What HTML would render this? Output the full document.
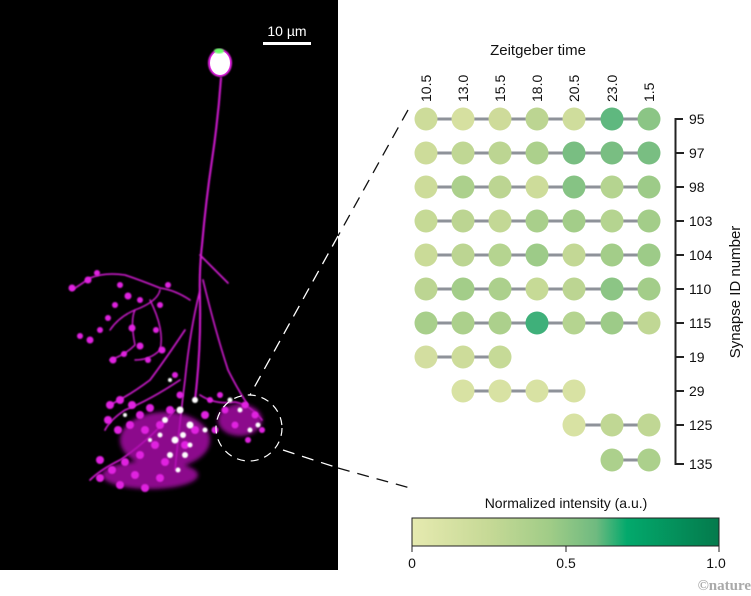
<!DOCTYPE html>
<html><head><meta charset="utf-8"><style>
html,body{margin:0;padding:0;background:#fff;width:751px;height:596px;overflow:hidden}
svg{display:block}
text{font-family:"Liberation Sans",Arial,sans-serif;fill:#111}
</style></head><body>
<svg width="751" height="596" viewBox="0 0 751 596" xmlns="http://www.w3.org/2000/svg">
<defs>
<linearGradient id="cb" x1="0" x2="1" y1="0" y2="0">
<stop offset="0" stop-color="#e6eab0"/>
<stop offset="0.25" stop-color="#c6d996"/>
<stop offset="0.45" stop-color="#a0cc87"/>
<stop offset="0.6" stop-color="#6fba80"/>
<stop offset="0.7" stop-color="#03a96c"/>
<stop offset="1" stop-color="#047a4c"/>
</linearGradient>
<filter id="gl"><feGaussianBlur stdDeviation="0.7"/></filter>
<filter id="gl2"><feGaussianBlur stdDeviation="2"/></filter>
</defs>
<rect x="0" y="0" width="338" height="570" fill="#000"/>
<rect x="263" y="42" width="48" height="3" fill="#fff"/>
<text x="287" y="36" font-size="14" text-anchor="middle" style="fill:#fff">10 µm</text>
<!-- neuron -->
<g filter="url(#gl)" fill="none" stroke="#d81ed8" stroke-linecap="round" stroke-linejoin="round">
<path d="M221 78 Q218 120 212 160 Q206 200 202 245 Q199 270 200 300 Q201 350 195 400" stroke-width="2"/>
<path d="M200 255 Q215 270 228 283" stroke-width="1.6"/>
<path d="M203 280 Q215 330 228 370 Q238 390 248 405" stroke-width="1.6"/>
<path d="M200 290 Q190 330 185 380 Q180 420 175 470" stroke-width="1.6"/>
<path d="M190 300 Q175 290 160 288 Q140 280 125 275 Q105 272 90 278 Q80 285 72 290" stroke-width="1.6"/>
<path d="M160 290 Q158 300 140 308 Q120 315 110 330" stroke-width="1.4"/>
<path d="M135 310 Q130 320 135 345 Q125 355 110 360" stroke-width="1.4"/>
<path d="M150 300 Q165 330 160 350 Q150 360 135 360" stroke-width="1.4"/>
<path d="M185 330 Q165 360 150 380 Q130 395 110 405" stroke-width="1.6"/>
<path d="M180 380 Q150 400 125 410 Q110 420 105 430" stroke-width="1.6"/>
<path d="M175 410 Q150 440 120 460 Q100 470 90 480" stroke-width="1.6"/>
<path d="M200 395 Q215 405 235 402 Q250 405 262 420" stroke-width="1.6"/>
</g>
<g filter="url(#gl2)" fill="#b010b0" opacity="0.8">
<ellipse cx="150" cy="475" rx="48" ry="14"/>
<ellipse cx="165" cy="440" rx="45" ry="28"/>
<ellipse cx="240" cy="420" rx="22" ry="16"/>
</g>
<g fill="#e020e0" filter="url(#gl)">
<circle cx="72" cy="288" r="3.5"/><circle cx="88" cy="280" r="3.5"/><circle cx="97" cy="273" r="3"/><circle cx="120" cy="285" r="3"/>
<circle cx="128" cy="296" r="3.5"/><circle cx="140" cy="300" r="3"/><circle cx="115" cy="305" r="3"/><circle cx="108" cy="318" r="3"/>
<circle cx="100" cy="330" r="3"/><circle cx="90" cy="340" r="3.5"/><circle cx="80" cy="336" r="3"/><circle cx="132" cy="328" r="3.5"/>
<circle cx="140" cy="346" r="3.5"/><circle cx="124" cy="354" r="3"/><circle cx="113" cy="360" r="3.5"/><circle cx="160" cy="305" r="3"/>
<circle cx="156" cy="330" r="3"/><circle cx="162" cy="350" r="3.5"/><circle cx="148" cy="360" r="3"/><circle cx="168" cy="285" r="3"/>
<circle cx="110" cy="405" r="4"/><circle cx="120" cy="400" r="4"/><circle cx="132" cy="405" r="4"/><circle cx="108" cy="420" r="4"/>
<circle cx="118" cy="430" r="4"/><circle cx="130" cy="425" r="4"/><circle cx="140" cy="415" r="4"/><circle cx="150" cy="408" r="4"/>
<circle cx="145" cy="430" r="4"/><circle cx="155" cy="445" r="4"/><circle cx="160" cy="425" r="4"/><circle cx="170" cy="410" r="4"/>
<circle cx="100" cy="460" r="4"/><circle cx="112" cy="470" r="4"/><circle cx="125" cy="462" r="4"/><circle cx="135" cy="475" r="4"/>
<circle cx="100" cy="478" r="4"/><circle cx="120" cy="485" r="4"/><circle cx="145" cy="488" r="4"/><circle cx="160" cy="478" r="4"/>
<circle cx="140" cy="455" r="4"/><circle cx="165" cy="462" r="4"/><circle cx="185" cy="445" r="4"/><circle cx="195" cy="430" r="4"/>
<circle cx="205" cy="415" r="4"/><circle cx="215" cy="430" r="3.5"/><circle cx="225" cy="410" r="3.5"/><circle cx="235" cy="425" r="3.5"/>
<circle cx="245" cy="405" r="3.5"/><circle cx="255" cy="415" r="3.5"/><circle cx="262" cy="430" r="3"/><circle cx="248" cy="440" r="3"/>
<circle cx="180" cy="395" r="3.5"/><circle cx="175" cy="375" r="3"/><circle cx="210" cy="400" r="3"/><circle cx="220" cy="395" r="3"/>
</g>
<g fill="#fff" filter="url(#gl)">
<circle cx="180" cy="410" r="3.5"/><circle cx="190" cy="425" r="3.5"/><circle cx="175" cy="440" r="3.5"/>
<circle cx="185" cy="455" r="3"/><circle cx="165" cy="420" r="3"/><circle cx="195" cy="400" r="3"/>
<circle cx="240" cy="410" r="2.5"/><circle cx="250" cy="430" r="2.5"/><circle cx="258" cy="425" r="2.5"/>
<circle cx="230" cy="400" r="2.5"/><circle cx="205" cy="430" r="2.5"/><circle cx="178" cy="470" r="2.5"/>
<circle cx="170" cy="455" r="3"/><circle cx="183" cy="435" r="3"/><circle cx="160" cy="435" r="2.5"/><circle cx="150" cy="440" r="2"/>
<circle cx="125" cy="415" r="2"/><circle cx="170" cy="380" r="2"/><circle cx="190" cy="445" r="2.5"/>
</g>
<ellipse cx="220" cy="63" rx="12" ry="14" fill="#e020e0" filter="url(#gl)"/>
<ellipse cx="220" cy="63" rx="10" ry="12" fill="#fff"/>
<ellipse cx="219" cy="51" rx="5" ry="2.5" fill="#6f6" filter="url(#gl)"/>
<circle cx="249" cy="428" r="33" fill="none" stroke="#fff" stroke-width="1.2" stroke-dasharray="8,6"/>
<g stroke="#111" stroke-width="1.3" stroke-dasharray="12,8" fill="none">
<line x1="408" y1="110" x2="338" y2="236"/>
<line x1="338" y1="468" x2="410" y2="488"/>
</g>
<g stroke="#fff" stroke-width="1.3" stroke-dasharray="12,8" fill="none">
<line x1="338" y1="236" x2="250" y2="395"/>
<line x1="283" y1="450" x2="338" y2="468"/>
</g>
<text x="538" y="55" font-size="15" text-anchor="middle">Zeitgeber time</text>
<g font-size="14">
<text transform="translate(431,102) rotate(-90)">10.5</text>
<text transform="translate(468,102) rotate(-90)">13.0</text>
<text transform="translate(505,102) rotate(-90)">15.5</text>
<text transform="translate(542,102) rotate(-90)">18.0</text>
<text transform="translate(579,102) rotate(-90)">20.5</text>
<text transform="translate(617,102) rotate(-90)">23.0</text>
<text transform="translate(654,102) rotate(-90)">1.5</text>
</g>
<g stroke="#8e9299" stroke-width="3">
<line x1="426" y1="119" x2="649" y2="119"/>
<line x1="426" y1="153" x2="649" y2="153"/>
<line x1="426" y1="187" x2="649" y2="187"/>
<line x1="426" y1="221" x2="649" y2="221"/>
<line x1="426" y1="255" x2="649" y2="255"/>
<line x1="426" y1="289" x2="649" y2="289"/>
<line x1="426" y1="323" x2="649" y2="323"/>
<line x1="426" y1="357" x2="500" y2="357"/>
<line x1="463" y1="391" x2="574" y2="391"/>
<line x1="574" y1="425" x2="649" y2="425"/>
<line x1="612" y1="460" x2="649" y2="460"/>
</g>
<g>
<circle cx="426" cy="119" r="11.5" fill="#cddc9a"/><circle cx="463" cy="119" r="11.5" fill="#d6e0a0"/><circle cx="500" cy="119" r="11.5" fill="#cedb9a"/><circle cx="537" cy="119" r="11.5" fill="#bcd592"/><circle cx="574" cy="119" r="11.5" fill="#cfdd9c"/><circle cx="612" cy="119" r="11.5" fill="#5fb87f"/><circle cx="649" cy="119" r="11.5" fill="#8bc585"/>
<circle cx="426" cy="153" r="11.5" fill="#cddc9a"/><circle cx="463" cy="153" r="11.5" fill="#c0d794"/><circle cx="500" cy="153" r="11.5" fill="#bcd592"/><circle cx="537" cy="153" r="11.5" fill="#acd08c"/><circle cx="574" cy="153" r="11.5" fill="#79be82"/><circle cx="612" cy="153" r="11.5" fill="#79be82"/><circle cx="649" cy="153" r="11.5" fill="#79be82"/>
<circle cx="426" cy="187" r="11.5" fill="#cddc9a"/><circle cx="463" cy="187" r="11.5" fill="#acd08c"/><circle cx="500" cy="187" r="11.5" fill="#bcd592"/><circle cx="537" cy="187" r="11.5" fill="#cddc9a"/><circle cx="574" cy="187" r="11.5" fill="#86c384"/><circle cx="612" cy="187" r="11.5" fill="#b5d490"/><circle cx="649" cy="187" r="11.5" fill="#9dcb88"/>
<circle cx="426" cy="221" r="11.5" fill="#c6da96"/><circle cx="463" cy="221" r="11.5" fill="#bcd592"/><circle cx="500" cy="221" r="11.5" fill="#c3d895"/><circle cx="537" cy="221" r="11.5" fill="#a9cf8b"/><circle cx="574" cy="221" r="11.5" fill="#a3cd89"/><circle cx="612" cy="221" r="11.5" fill="#b5d490"/><circle cx="649" cy="221" r="11.5" fill="#a3cd89"/>
<circle cx="426" cy="255" r="11.5" fill="#cadb98"/><circle cx="463" cy="255" r="11.5" fill="#bcd592"/><circle cx="500" cy="255" r="11.5" fill="#b5d490"/><circle cx="537" cy="255" r="11.5" fill="#9dcb88"/><circle cx="574" cy="255" r="11.5" fill="#c3d895"/><circle cx="612" cy="255" r="11.5" fill="#a3cd89"/><circle cx="649" cy="255" r="11.5" fill="#9dcb88"/>
<circle cx="426" cy="289" r="11.5" fill="#bcd592"/><circle cx="463" cy="289" r="11.5" fill="#a3cd89"/><circle cx="500" cy="289" r="11.5" fill="#acd08c"/><circle cx="537" cy="289" r="11.5" fill="#c6da96"/><circle cx="574" cy="289" r="11.5" fill="#bcd592"/><circle cx="612" cy="289" r="11.5" fill="#8cc585"/><circle cx="649" cy="289" r="11.5" fill="#a3cd89"/>
<circle cx="426" cy="323" r="11.5" fill="#a8cf8b"/><circle cx="463" cy="323" r="11.5" fill="#acd08c"/><circle cx="500" cy="323" r="11.5" fill="#acd08c"/><circle cx="537" cy="323" r="11.5" fill="#3fb07a"/><circle cx="574" cy="323" r="11.5" fill="#b5d490"/><circle cx="612" cy="323" r="11.5" fill="#9dcb88"/><circle cx="649" cy="323" r="11.5" fill="#c0d794"/>
<circle cx="426" cy="357" r="11.5" fill="#d3dea0"/><circle cx="463" cy="357" r="11.5" fill="#cddc9a"/><circle cx="500" cy="357" r="11.5" fill="#c6da97"/>
<circle cx="463" cy="391" r="11.5" fill="#d8e2a3"/><circle cx="500" cy="391" r="11.5" fill="#d8e2a3"/><circle cx="537" cy="391" r="11.5" fill="#d8e2a3"/><circle cx="574" cy="391" r="11.5" fill="#d8e2a3"/>
<circle cx="574" cy="425" r="11.5" fill="#d8e2a3"/><circle cx="612" cy="425" r="11.5" fill="#c0d794"/><circle cx="649" cy="425" r="11.5" fill="#c0d794"/>
<circle cx="612" cy="460" r="11.5" fill="#acd08c"/><circle cx="649" cy="460" r="11.5" fill="#acd08c"/>
</g>
<g stroke="#222" stroke-width="2" fill="none">
<path d="M683 119 H675.5 V464 H684"/>
<line x1="675" y1="153" x2="684" y2="153"/><line x1="675" y1="187" x2="684" y2="187"/>
<line x1="675" y1="221" x2="684" y2="221"/><line x1="675" y1="255" x2="684" y2="255"/>
<line x1="675" y1="289" x2="684" y2="289"/><line x1="675" y1="323" x2="684" y2="323"/>
<line x1="675" y1="357" x2="684" y2="357"/><line x1="675" y1="391" x2="684" y2="391"/>
<line x1="675" y1="425" x2="684" y2="425"/>
</g>
<g font-size="14">
<text x="689" y="124">95</text><text x="689" y="158">97</text><text x="689" y="192">98</text>
<text x="689" y="226">103</text><text x="689" y="260">104</text><text x="689" y="294">110</text>
<text x="689" y="328">115</text><text x="689" y="362">19</text><text x="689" y="396">29</text>
<text x="689" y="430">125</text><text x="689" y="469">135</text>
</g>
<text transform="translate(740,292) rotate(-90)" font-size="15" text-anchor="middle">Synapse ID number</text>
<text x="566" y="508" font-size="14" text-anchor="middle">Normalized intensity (a.u.)</text>
<rect x="412" y="518" width="307" height="28" fill="url(#cb)" stroke="#222" stroke-width="1"/>
<g stroke="#222" stroke-width="1"><line x1="412" y1="546" x2="412" y2="552"/><line x1="566" y1="546" x2="566" y2="552"/><line x1="719" y1="546" x2="719" y2="552"/></g>
<g font-size="14" text-anchor="middle"><text x="412" y="568">0</text><text x="566" y="568">0.5</text><text x="716" y="568">1.0</text></g>
<text x="751" y="590" font-size="15" text-anchor="end" style="fill:#aaa;font-family:'Liberation Serif',serif;font-weight:bold">©nature</text>
</svg>
</body></html>
